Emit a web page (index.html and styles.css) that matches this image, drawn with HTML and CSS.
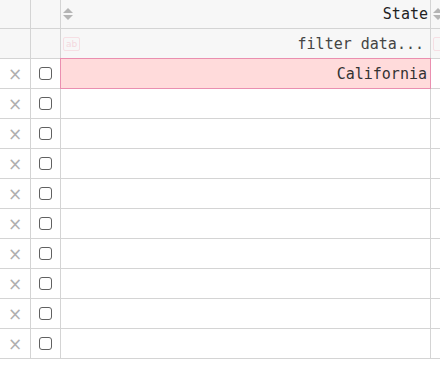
FILE: index.html
```html
<!DOCTYPE html>
<html>
<head>
  <meta charset="utf-8">
  <link rel="stylesheet" href="styles.css">
</head>
<body>
  <div class="grid">
    <div class="cell head"></div>
    <div class="cell head"></div>
    <div class="cell head title">
      <span class="sorter"></span>
      <span class="label">State</span>
    </div>
    <div class="cell head next"><span class="sorter"></span></div>

    <div class="cell filter"></div>
    <div class="cell filter"></div>
    <div class="cell filter title">
      <span class="filter-icon">ab</span>
      <span class="placeholder">filter data...</span>
    </div>
    <div class="cell filter next"><span class="filter-icon"></span></div>

    <div class="cell mark">&times;</div>
    <div class="cell pick"><span class="box"></span></div>
    <div class="cell value selected">California</div>
    <div class="cell next"></div>

    <div class="cell mark">&times;</div>
    <div class="cell pick"><span class="box"></span></div>
    <div class="cell value"></div>
    <div class="cell next"></div>

    <div class="cell mark">&times;</div>
    <div class="cell pick"><span class="box"></span></div>
    <div class="cell value"></div>
    <div class="cell next"></div>

    <div class="cell mark">&times;</div>
    <div class="cell pick"><span class="box"></span></div>
    <div class="cell value"></div>
    <div class="cell next"></div>

    <div class="cell mark">&times;</div>
    <div class="cell pick"><span class="box"></span></div>
    <div class="cell value"></div>
    <div class="cell next"></div>

    <div class="cell mark">&times;</div>
    <div class="cell pick"><span class="box"></span></div>
    <div class="cell value"></div>
    <div class="cell next"></div>

    <div class="cell mark">&times;</div>
    <div class="cell pick"><span class="box"></span></div>
    <div class="cell value"></div>
    <div class="cell next"></div>

    <div class="cell mark">&times;</div>
    <div class="cell pick"><span class="box"></span></div>
    <div class="cell value"></div>
    <div class="cell next"></div>

    <div class="cell mark">&times;</div>
    <div class="cell pick"><span class="box"></span></div>
    <div class="cell value"></div>
    <div class="cell next"></div>

    <div class="cell mark">&times;</div>
    <div class="cell pick"><span class="box"></span></div>
    <div class="cell value"></div>
    <div class="cell next"></div>
  </div>
</body>
</html>
```
FILE: styles.css
```css
body {
  margin: 0;
  padding: 0;
  background-color: #ffffff;
  overflow: hidden;
  font-family: 'DejaVu Sans Mono', monospace;
  color: #333333;
}

.grid {
  display: grid;
  grid-template-columns: 31px 30px 370px 120px;
  grid-template-rows: 29px repeat(11, 30px);
  width: 551px;
}

.cell {
  box-sizing: border-box;
  border-right: 1px solid #d4d4d4;
  border-bottom: 1px solid #d4d4d4;
  display: flex;
  align-items: center;
  position: relative;
}

.head,
.filter {
  background-color: #f7f7f7;
}

.title {
  justify-content: space-between;
  padding: 0 2px 0 2px;
}

.head .label {
  font-size: 15px;
  color: #222222;
}

.filter .placeholder {
  font-size: 15px;
  color: #444444;
  padding-right: 4px;
}

.sorter {
  width: 10px;
  height: 12px;
  position: relative;
}

.sorter::before,
.sorter::after {
  content: "";
  position: absolute;
  left: 0;
  border-left: 5px solid transparent;
  border-right: 5px solid transparent;
}

.sorter::before {
  top: 0;
  border-bottom: 5px solid #b5b5b5;
}

.sorter::after {
  bottom: 0;
  border-top: 5px solid #b5b5b5;
}

.next {
  padding-left: 2px;
}

.filter-icon {
  box-sizing: border-box;
  width: 17px;
  height: 14px;
  border: 1px solid #f6dfe4;
  border-radius: 2px;
  font-family: 'DejaVu Sans', sans-serif;
  font-size: 9px;
  line-height: 12px;
  text-align: center;
  color: #f4d8de;
}

.mark {
  justify-content: center;
  color: #b0b0b0;
  font-family: 'DejaVu Sans', sans-serif;
  font-size: 17px;
}

.pick {
  justify-content: center;
}

.box {
  box-sizing: border-box;
  width: 13px;
  height: 13px;
  border: 1px solid #606060;
  border-radius: 3px;
  background-color: #ffffff;
}

.value {
  justify-content: flex-end;
  padding-right: 3px;
  font-size: 15px;
}

.selected {
  background-color: #ffdbdb;
}

.selected::after {
  content: "";
  position: absolute;
  top: -1px;
  left: -1px;
  right: -1px;
  bottom: -1px;
  border: 1px solid #ea8fb0;
}
```
